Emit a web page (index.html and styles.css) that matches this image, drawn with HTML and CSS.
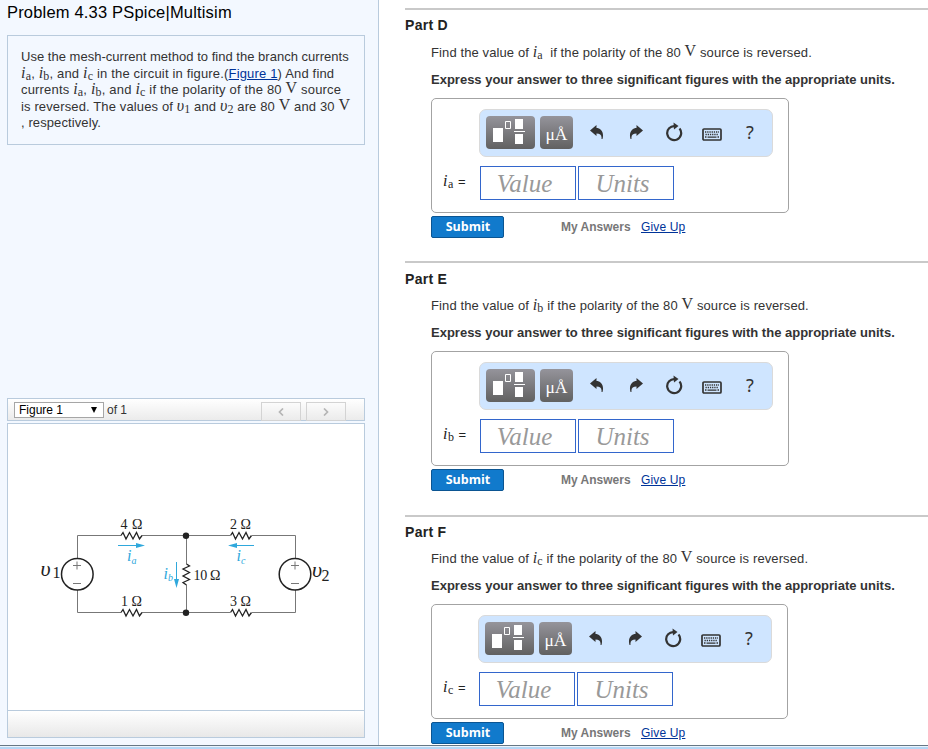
FILE: index.html
```
<!DOCTYPE html>
<html lang="en">
<head>
    <meta charset="UTF-8">
    <title>Problem 4.33 PSpice|Multisim</title>
    <link rel="stylesheet" href="styles.css">
</head>
<body>
    <!-- shared toolbar icons -->
    <svg class="sprite" width="0" height="0">
        <symbol id="templates" viewBox="0 0 49 33">
            <path fill="#fff" d="M7 12h10v14H7zM29 3h8v10h-8zM29 18h8v10h-8zM28 15h11v1H28z"/>
            <path fill="none" stroke="#fff" d="M19.500 5.500h5v7h-5z"/>
        </symbol>
        <symbol id="undo" viewBox="0 0 14 14">
            <path fill="#333" d="M0 5.500 6.500 0v3C10.500 3 14.500 7 12.500 14h-1C12 10 10 8.500 6.500 8.500V11z"/>
        </symbol>
        <symbol id="reset" viewBox="0 0 18 20">
            <path fill="none" stroke="#333" stroke-width="2.200" d="M10 4.100A7 7 0 1 0 14.500 6.500"/>
            <path fill="#333" d="M8.500 .500 13.500 4 9 7.500z"/>
        </symbol>
        <symbol id="keyboard" viewBox="0 0 20 13">
            <rect x="1" y="1" width="18" height="11" rx="1" fill="#cfe5ff" stroke="#333" stroke-width="1.700"/>
            <path fill="none" stroke="#333" stroke-width="1.300" stroke-dasharray="1.300 .900" d="M3 4h14M3.500 6.500h13"/>
            <path fill="none" stroke="#333" stroke-width="1.300" d="M3 9h1.500M5.500 9.200h9M15.500 9h1.500"/>
        </symbol>
    </svg>

    <div class="page">
        <aside class="sidebar">
            <h1>Problem 4.33 PSpice|Multisim</h1>
            <div class="problem">
                <p class="l1">Use the mesh-current method to find the branch currents</p>
                <p class="l2"><i>i</i><sub>a</sub>, <i>i</i><sub>b</sub>, and <i>i</i><sub>c</sub> in the circuit in figure.(<a href="#figure">Figure 1</a>) And find</p>
                <p class="l3">currents <i>i</i><sub>a</sub>, <i>i</i><sub>b</sub>, and <i>i</i><sub>c</sub> if the polarity of the 80 <b>V</b> source</p>
                <p class="l4">is reversed. The values of <i>υ</i><sub>1</sub> and <i>υ</i><sub>2</sub> are 80 <b>V</b> and 30 <b>V</b></p>
                <p class="l5">, respectively.</p>
            </div>

            <div class="figure-nav">
                <span class="select">Figure 1 <span class="caret"></span></span>
                <span class="count">of 1</span>
                <button class="nav-btn"><svg width="6" height="8" viewBox="0 0 6 8"><path d="M5 .500 1.500 4 5 7.500"/></svg></button>
                <button class="nav-btn"><svg width="6" height="8" viewBox="0 0 6 8"><path d="M1 .500 4.500 4 1 7.500"/></svg></button>
            </div>
            <div class="figure" id="figure">
                <svg class="circuit" width="356" height="286" viewBox="8 424 356 286">
                    <!-- wires -->
                    <g class="wire">
                        <path d="M77.500 558V535.500H121M142 535.500H230M252 535.500H295.500V558"/>
                        <path d="M77.500 590V612.500H121M142 612.500H230M252 612.500H295.500V590"/>
                        <path d="M186.500 535.500V564M186.500 585V612.500"/>
                    </g>
                    <!-- resistors -->
                    <g class="resistor">
                        <path id="r" d="M121 535.500l2-3 3 6.500 3.500-6.500 3.500 6.500 3.500-6.500 3 6.500 2.500-3.500"/>
                        <use href="#r" x="109.500"/>
                        <use href="#r" y="77"/>
                        <use href="#r" x="109.500" y="77"/>
                        <path d="M186.500 564l3 2-6.500 3 6.500 3.500-6.500 3.500 6.500 3.500-6.500 3 3.500 2.500"/>
                    </g>
                    <circle cx="186" cy="535.700" r="3.200"/>
                    <circle cx="186" cy="612.700" r="3.200"/>
                    <!-- sources -->
                    <g class="source">
                        <circle cx="77.300" cy="574.200" r="15.800"/>
                        <circle cx="295" cy="574.200" r="15.800"/>
                    </g>
                    <path class="sign" d="M73 565.500h8M77 561.500v8M73 583.500h8M291 565.500h8M295 561.500v8M291 583.500h8"/>
                    <!-- current arrows -->
                    <g class="arrow">
                        <path d="M118 545.500h20M254 545.500h-20M176.500 562v18"/>
                        <path class="head" d="M136 543l9 2.500-9 2.500zM237 543l-9 2.500 9 2.500zM174 579l2.500 9 2.500-9z"/>
                    </g>
                    <g class="ohm">
                        <text x="120.500" y="529" textLength="22">4 Ω</text>
                        <text x="230" y="529" textLength="21">2 Ω</text>
                        <text x="121" y="606" textLength="21">1 Ω</text>
                        <text x="230" y="606" textLength="21">3 Ω</text>
                        <text x="193.500" y="579.500" textLength="27">10 Ω</text>
                    </g>
                    <g class="cur">
                        <text x="127" y="561">i<tspan class="s" dy="2.500">a</tspan></text>
                        <text x="236.500" y="561">i<tspan class="s" dy="2.500">c</tspan></text>
                        <text x="163.500" y="578.500">i<tspan class="s" dy="2.500">b</tspan></text>
                    </g>
                    <g class="volt">
                        <text x="40.500" y="576"><tspan class="v">υ</tspan><tspan x="52.500" dy="2">1</tspan></text>
                        <text x="312" y="577"><tspan class="v">υ</tspan><tspan x="321.500" dy="4">2</tspan></text>
                    </g>
                </svg>
                <div class="figure-foot"></div>
            </div>
        </aside>

        <main class="parts">
            <section class="part">
                <h2>Part D</h2>
                <p class="ask">Find the value of <i>i</i><sub>a</sub> &nbsp;if the polarity of the 80 <b>V</b> source is reversed.</p>
                <p class="express">Express your answer to three significant figures with the appropriate units.</p>
                <div class="answer">
                    <div class="toolbar">
                        <button class="tool wide"><svg width="49" height="33"><use href="#templates"/></svg></button>
                        <button class="tool">μÅ</button>
                        <svg class="undo" width="14" height="14"><use href="#undo"/></svg>
                        <svg class="redo" width="14" height="14"><use href="#undo"/></svg>
                        <svg class="reset" width="18" height="20"><use href="#reset"/></svg>
                        <svg class="keyboard" width="20" height="13"><use href="#keyboard"/></svg>
                        <span class="help">?</span>
                    </div>
                    <div class="fields">
                        <span class="var"><i>i</i><sub>a</sub> =</span>
                        <span class="field">Value</span>
                        <span class="field">Units</span>
                    </div>
                </div>
                <div class="actions">
                    <button class="submit">Submit</button>
                    <span class="mine">My Answers</span>
                    <a href="#">Give Up</a>
                </div>
            </section>

            <section class="part">
                <h2>Part E</h2>
                <p class="ask">Find the value of <i>i</i><sub>b</sub> if the polarity of the 80 <b>V</b> source is reversed.</p>
                <p class="express">Express your answer to three significant figures with the appropriate units.</p>
                <div class="answer">
                    <div class="toolbar">
                        <button class="tool wide"><svg width="49" height="33"><use href="#templates"/></svg></button>
                        <button class="tool">μÅ</button>
                        <svg class="undo" width="14" height="14"><use href="#undo"/></svg>
                        <svg class="redo" width="14" height="14"><use href="#undo"/></svg>
                        <svg class="reset" width="18" height="20"><use href="#reset"/></svg>
                        <svg class="keyboard" width="20" height="13"><use href="#keyboard"/></svg>
                        <span class="help">?</span>
                    </div>
                    <div class="fields">
                        <span class="var"><i>i</i><sub>b</sub> =</span>
                        <span class="field">Value</span>
                        <span class="field">Units</span>
                    </div>
                </div>
                <div class="actions">
                    <button class="submit">Submit</button>
                    <span class="mine">My Answers</span>
                    <a href="#">Give Up</a>
                </div>
            </section>

            <section class="part last">
                <h2>Part F</h2>
                <p class="ask">Find the value of <i>i</i><sub>c</sub> if the polarity of the 80 <b>V</b> source is reversed.</p>
                <p class="express">Express your answer to three significant figures with the appropriate units.</p>
                <div class="answer">
                    <div class="toolbar">
                        <button class="tool wide"><svg width="49" height="33"><use href="#templates"/></svg></button>
                        <button class="tool">μÅ</button>
                        <svg class="undo" width="14" height="14"><use href="#undo"/></svg>
                        <svg class="redo" width="14" height="14"><use href="#undo"/></svg>
                        <svg class="reset" width="18" height="20"><use href="#reset"/></svg>
                        <svg class="keyboard" width="20" height="13"><use href="#keyboard"/></svg>
                        <span class="help">?</span>
                    </div>
                    <div class="fields">
                        <span class="var"><i>i</i><sub>c</sub> =</span>
                        <span class="field">Value</span>
                        <span class="field">Units</span>
                    </div>
                </div>
                <div class="actions">
                    <button class="submit">Submit</button>
                    <span class="mine">My Answers</span>
                    <a href="#">Give Up</a>
                </div>
            </section>
        </main>
    </div>
    <footer class="taskbar"></footer>
</body>
</html>
```
FILE: styles.css
```
* {
    box-sizing: border-box;
}

body {
    margin: 0;
    height: 749px;
    overflow: hidden;
    background: #fff;
    color: #333;
    font: 13px/16px "Liberation Sans", Arial, sans-serif;
}

h1, h2, p {
    margin: 0;
    white-space: nowrap;
}

a {
    color: #039;
}

button {
    padding: 0;
    font-family: inherit;
}

.sprite {
    display: none;
}

.page {
    display: flex;
    height: 745px;
    overflow: hidden;
}

/* left column */
.sidebar {
    flex: none;
    width: 379px;
    padding: 2px 14px 0 7px;
    background: #f3f8ff;
    border-right: 1px solid #b9cbdd;
}

h1 {
    color: #000;
    font-size: 16.5px;
    font-weight: normal;
    line-height: 20px;
    letter-spacing: 0.18px;
}

.problem {
    width: 358px;
    height: 110px;
    margin-top: 13px;
    padding: 13px 0 0 13px;
    border: 1px solid #b9cbdd;
    line-height: 16.6px;
}

.problem p {
    height: 16.6px;
}

.problem .l1 {
    letter-spacing: 0.02px;
}

.problem .l2 {
    letter-spacing: 0.17px;
}

.problem .l3 {
    letter-spacing: 0.18px;
}

.problem .l4 {
    letter-spacing: 0.13px;
}

.problem .l5 {
    letter-spacing: 0.1px;
}

/* math */
p i, .var i {
    font-family: "Liberation Serif", serif;
    font-size: 16px;
    line-height: 0;
}

p sub, .var sub {
    font-family: "Liberation Serif", serif;
    font-size: 12px;
    line-height: 0;
    vertical-align: -2px;
}

p b {
    font-family: "Liberation Serif", serif;
    font-size: 16px;
    font-weight: normal;
    line-height: 0;
    vertical-align: 1px;
}

/* figure */
.figure-nav {
    display: flex;
    width: 358px;
    height: 23px;
    margin-top: 253px;
    padding: 3px 18px 0 6px;
    background: linear-gradient(#fff, #ebebeb);
    border: 1px solid #b9cbdd;
}

.select {
    display: flex;
    justify-content: space-between;
    align-items: center;
    width: 90px;
    height: 16px;
    padding: 0 6px 0 4px;
    background: #fff;
    border: 1px solid #a6a6a6;
    color: #000;
    font-size: 12px;
}

.caret {
    border: 3.5px solid transparent;
    border-top: 6px solid #000;
    border-bottom: 0;
}

.count {
    flex: 1;
    padding-left: 3px;
    font-size: 12px;
}

.nav-btn {
    width: 40px;
    height: 19px;
    margin-left: 5px;
    background: transparent;
    border: 1px solid #d3d3d3;
    line-height: 0;
}

.nav-btn path {
    fill: none;
    stroke: #b5b5b5;
    stroke-width: 1.7;
}

.figure {
    width: 358px;
    height: 315px;
    margin-top: 2px;
    background: #fff;
    border: 1px solid #b9cbdd;
}

.circuit {
    display: block;
    font-family: "Liberation Serif", serif;
    fill: #222;
}

.figure-foot {
    height: 27px;
    background: linear-gradient(#fff, #e8e8e8);
    border-top: 1px solid #b9cbdd;
}

.wire {
    fill: none;
    stroke: #777;
}

.resistor {
    fill: none;
    stroke: #222;
    stroke-width: 1.3;
}

.source {
    fill: #fff;
    stroke: #222;
    stroke-width: 1.5;
}

.sign {
    stroke: #777;
}

.arrow {
    stroke: #2fa8dc;
}

.arrow .head {
    fill: #2fa8dc;
    stroke: none;
}

.ohm {
    font-size: 14px;
}

.cur {
    fill: #2fa8dc;
    font-size: 16px;
    font-style: italic;
}

.cur .s {
    font-size: 10px;
}

.volt {
    font-size: 16px;
}

.volt .v {
    font-size: 22px;
    font-style: italic;
}

/* parts */
.parts {
    flex: 1;
    padding: 8px 0 0 26px;
}

.part {
    height: 253px;
    padding-top: 7px;
    border-top: 2px solid #c9c9c9;
}

.part:first-child h2 {
    margin: -1px 0 11px;
}

/* the last rule sits one pixel lower, its content stays in step */
.part.last {
    height: 252px;
    margin-top: 1px;
    padding-top: 6px;
}

h2 {
    margin-bottom: 10px;
    color: #222;
    font-size: 14px;
    line-height: 18px;
    letter-spacing: 0.3px;
}

.ask,
.express,
.answer,
.actions {
    margin-left: 26px;
}

.ask {
    height: 16px;
    letter-spacing: 0.11px;
}

.express {
    height: 16px;
    margin-top: 11px;
    font-weight: bold;
}

.answer {
    width: 358px;
    height: 115px;
    margin-top: 10px;
    padding: 10px 0 0 11px;
    border: 1px solid #a3a3a3;
    border-radius: 5px;
}

.last .answer {
    width: 357px;
}

.toolbar {
    display: flex;
    align-items: center;
    width: 294px;
    height: 48px;
    margin-left: 36px;
    padding: 0 0 2px 6px;
    background: #cfe5ff;
    border: 1px solid #dadada;
    border-radius: 7px;
}

.last .toolbar {
    margin-left: 35px;
}

.tool {
    flex: none;
    width: 33px;
    height: 33px;
    margin-right: 5px;
    background: linear-gradient(#95949b, #616161);
    border: 0;
    border-radius: 4px;
    color: #fff;
    font: 17.5px/37px "Liberation Serif", serif;
}

.tool.wide {
    width: 49px;
}

.tool svg {
    display: block;
}

.undo {
    margin-left: 12px;
}

.redo {
    margin-left: 25px;
    transform: scaleX(-1);
}

.reset {
    margin: -1px 0 0 22px;
}

.keyboard {
    margin: 4px 0 0 19px;
}

.help {
    margin-left: 24px;
    font: 18px/20px "Noto Sans", sans-serif;
}

.fields {
    display: flex;
    gap: 2px;
    margin-top: 9px;
}

.var {
    width: 35px;
    padding-top: 8px;
    color: #222;
    white-space: nowrap;
    letter-spacing: 0.5px;
}

.last .var {
    width: 34px;
}

.field {
    width: 96px;
    height: 34px;
    padding-right: 7px;
    border: 1px solid #36c;
    color: #999;
    font: italic 25px/33px "Liberation Serif", serif;
    text-align: center;
}

.actions {
    display: flex;
    margin-top: 3px;
    font-size: 12px;
    line-height: 22px;
    letter-spacing: 0.15px;
}

.submit {
    width: 73px;
    height: 22px;
    padding: 0 0 1px 1px;
    background: #117acc;
    border: 1px solid #0b5592;
    border-radius: 2px;
    color: #fff;
    font: bold 12.5px/18px "Open Sans", sans-serif;
}

.mine {
    width: 80px;
    margin-left: 57px;
    color: #777;
    font-weight: bold;
    letter-spacing: 0;
}

/* window edge */
.taskbar {
    height: 4px;
    background: linear-gradient(#eaf4fc 0 1px, #b4d6f5 1px);
    border-top: 1px solid #667785;
}
```
